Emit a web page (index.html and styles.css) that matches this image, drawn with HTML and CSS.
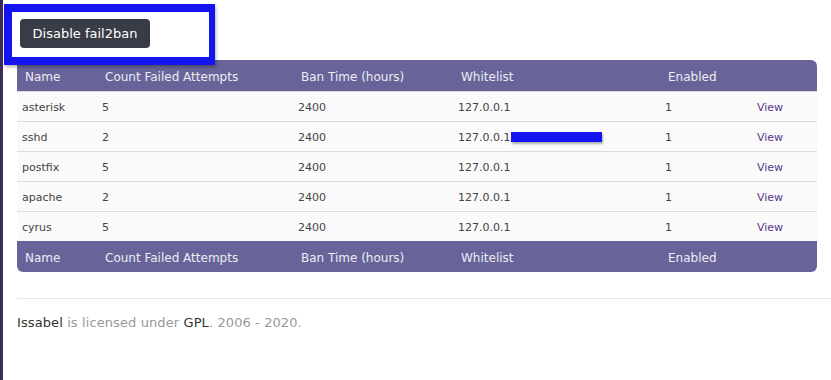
FILE: index.html
```html
<!DOCTYPE html>
<html lang="en">
<head>
    <meta charset="UTF-8">
    <meta name="viewport" content="width=device-width, initial-scale=1.0">
    <title>Fail2ban</title>
    <link rel="stylesheet" href="styles.css">
</head>
<body>
    <div class="layout">
        <div class="sidebar"></div>

        <div class="main">
            <div class="toolbar">
                <button class="btn">Disable fail2ban</button>
                <div class="highlight"></div>
            </div>

            <table class="jails">
                <colgroup>
                    <col style="width: 80px">
                    <col style="width: 196px">
                    <col style="width: 160px">
                    <col style="width: 207px">
                    <col style="width: 92px">
                    <col style="width: 65px">
                </colgroup>
                <thead>
                    <tr>
                        <th>Name</th>
                        <th>Count Failed Attempts</th>
                        <th>Ban Time (hours)</th>
                        <th>Whitelist</th>
                        <th>Enabled</th>
                        <th></th>
                    </tr>
                </thead>
                <tbody>
                    <tr>
                        <td>asterisk</td><td>5</td><td>2400</td><td>127.0.0.1</td><td>1</td><td><a href="#">View</a></td>
                    </tr>
                    <tr>
                        <td>sshd</td><td>2</td><td>2400</td><td>127.0.0.1<span class="redacted"></span></td><td>1</td><td><a href="#">View</a></td>
                    </tr>
                    <tr>
                        <td>postfix</td><td>5</td><td>2400</td><td>127.0.0.1</td><td>1</td><td><a href="#">View</a></td>
                    </tr>
                    <tr>
                        <td>apache</td><td>2</td><td>2400</td><td>127.0.0.1</td><td>1</td><td><a href="#">View</a></td>
                    </tr>
                    <tr>
                        <td>cyrus</td><td>5</td><td>2400</td><td>127.0.0.1</td><td>1</td><td><a href="#">View</a></td>
                    </tr>
                </tbody>
                <tfoot>
                    <tr>
                        <th>Name</th>
                        <th>Count Failed Attempts</th>
                        <th>Ban Time (hours)</th>
                        <th>Whitelist</th>
                        <th>Enabled</th>
                        <th></th>
                    </tr>
                </tfoot>
            </table>

            <div class="footer">
                <p><a href="#">Issabel</a> is licensed under <a href="#">GPL</a>. 2006 - 2020.</p>
            </div>
        </div>
    </div>
</body>
</html>
```

FILE: styles.css
```css
body {
    margin: 0;
    padding: 0;
    background-color: #fff;
    font-family: "DejaVu Sans", Verdana, sans-serif;
    color: #444;
}

.layout {
    display: flex;
    min-height: 380px;
}

.sidebar {
    width: 3px;
    background-color: #3b2a5e;
    flex-shrink: 0;
}

.main {
    flex: 1;
    padding: 19px 14px 0 14px;
}

.toolbar {
    position: relative;
    padding-left: 3px;
    margin-bottom: 12px;
    height: 29px;
}

.btn {
    height: 29px;
    width: 130px;
    padding: 0;
    border: 0;
    border-radius: 4px;
    background-color: #383c46;
    color: #fff;
    font-family: "DejaVu Sans", Verdana, sans-serif;
    font-size: 13px;
}

/* marco azul de anotación */
.highlight {
    position: absolute;
    left: -13px;
    top: -15px;
    width: 211px;
    height: 61px;
    box-sizing: border-box;
    border: 8px solid #1414f0;
    border-right-width: 6px;
    box-shadow: 1px 2px 3px rgba(0,0,0,0.3);
    z-index: 2;
}

.jails {
    width: 800px;
    border-collapse: separate;
    border-spacing: 0;
    table-layout: fixed;
}

.jails th {
    height: 31px;
    padding: 2px 8px 0 8px;
    box-sizing: border-box;
    background-color: #68649a;
    color: #ececf2;
    font-size: 12px;
    font-weight: normal;
    text-align: left;
}

.jails thead th:first-child {
    border-top-left-radius: 6px;
}

.jails thead th:last-child {
    border-top-right-radius: 6px;
}

.jails tfoot th:first-child {
    border-bottom-left-radius: 6px;
}

.jails tfoot th:last-child {
    border-bottom-right-radius: 6px;
}

.jails td {
    height: 30px;
    padding: 2px 5px 0 5px;
    box-sizing: border-box;
    border-top: 1px solid #dcdcdc;
    background-color: #fafafa;
    font-size: 11px;
    color: #444;
}

.jails td a {
    color: #56398a;
    text-decoration: none;
}

.redacted {
    display: inline-block;
    width: 91px;
    height: 10px;
    margin-left: 1px;
    vertical-align: -1px;
    background-color: #1414f0;
    box-shadow: 1px 2px 2px rgba(0,0,0,0.3);
}

.footer {
    margin-top: 26px;
    margin-right: -14px;
    border-top: 1px solid #e8e8e8;
}

.footer p {
    margin: 15px 0 0 0;
    font-size: 13px;
    line-height: 18px;
    letter-spacing: 0.1px;
    color: #999;
}

.footer a {
    color: #333;
    text-decoration: none;
}
```
